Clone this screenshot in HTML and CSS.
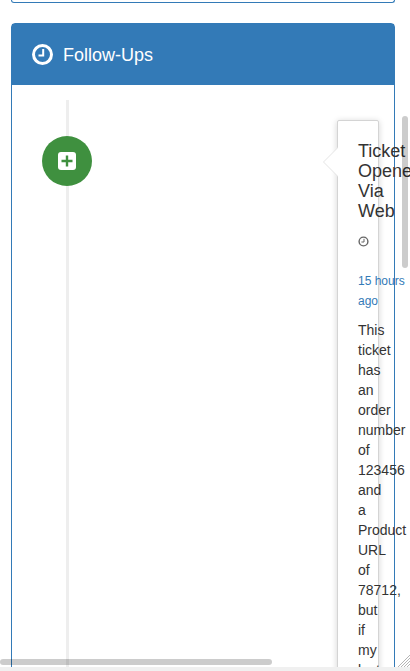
FILE: index.html
```html
<!DOCTYPE html>
<html lang="en">
<head>
  <meta charset="UTF-8" />
  <meta name="viewport" content="width=device-width, initial-scale=1.0"/>
  <title>Follow-Ups</title>
  <link rel="stylesheet" href="styles.css">
</head>
<body>
  <div class="window">
    <div class="panel-end"></div>

    <div class="panel">
      <div class="panel-heading">
        <svg class="heading-icon" viewBox="0 0 21 21">
          <circle cx="10.5" cy="10.5" r="9" fill="none" stroke="#fff" stroke-width="3"/>
          <path d="M11.2 5v6.5H6.5" fill="none" stroke="#fff" stroke-width="2"/>
        </svg>
        <span>Follow-Ups</span>
      </div>

      <div class="timeline">
        <div class="timeline-item">
          <div class="badge">
            <svg class="badge-icon" viewBox="0 0 18 18">
              <rect width="18" height="18" rx="3" fill="#fff"/>
              <path d="M9 3.5v11M3.5 9h11" fill="none" stroke="#3f903f" stroke-width="2.4"/>
            </svg>
          </div>
          <div class="timeline-panel">
            <h4>Ticket Opened Via Web</h4>
            <svg class="small-clock" viewBox="0 0 11 11">
              <circle cx="5.5" cy="5.5" r="4.4" fill="none" stroke="#666" stroke-width="1.4"/>
              <path d="M6 2.8v3.2H3.4" fill="none" stroke="#666" stroke-width="1"/>
            </svg>
            <a class="time-link" href="#">15&nbsp;hours ago</a>
            <p>This ticket has an order number of 123456 and a Product URL of 78712, but if my last</p>
          </div>
        </div>
      </div>
    </div>

    <div class="thumb-vertical"></div>
    <div class="thumb-horizontal"></div>
    <div class="bottom-strip"></div>
    <svg class="resize-grip" viewBox="0 0 13 13">
      <path d="M13 1 1 13M13 4 4 13M13 7 7 13M13 10 10 13" fill="none" stroke="#b5b5b5" stroke-width="1"/>
    </svg>
  </div>
</body>
</html>
```

FILE: styles.css
```css
body {
  margin: 0;
  font-family: "Liberation Sans", Arial, sans-serif;
  font-size: 14px;
  line-height: 20px;
  color: #333;
  background-color: #fff;
}

.window {
  position: relative;
  width: 410px;
  height: 671px;
  overflow: hidden;
}

.panel-end {
  width: 382px;
  height: 2px;
  margin-left: 11px;
  border: 1px solid #337ab7;
  border-top: 0;
  border-radius: 0 0 4px 4px;
}

.panel {
  width: 382px;
  margin: 20px 0 0 11px;
  border: 1px solid #337ab7;
  border-radius: 4px;
}

.panel-heading {
  display: flex;
  align-items: center;
  gap: 10px;
  height: 61px;
  padding-left: 20px;
  background-color: #337ab7;
  color: #fff;
  font-size: 18px;
}

.heading-icon {
  width: 21px;
  height: 21px;
}

.timeline {
  position: relative;
  padding-top: 35px;
}

.timeline::before {
  content: "";
  position: absolute;
  top: 15px;
  left: 54px;
  bottom: 0;
  width: 3px;
  background-color: #eee;
}

.timeline-item {
  display: flex;
  justify-content: space-between;
  align-items: flex-start;
  padding-right: 15px;
}

.badge {
  position: relative;
  display: flex;
  align-items: center;
  justify-content: center;
  width: 50px;
  height: 50px;
  margin: 16px 0 0 30px;
  border-radius: 50%;
  background-color: #3f903f;
}

.badge-icon {
  width: 18px;
  height: 18px;
}

.timeline-panel {
  position: relative;
  width: 0;
  padding: 20px;
  border: 1px solid #d4d4d4;
  border-radius: 2px;
  background-color: #fff;
  box-shadow: 0 1px 6px rgba(0, 0, 0, 0.175);
}

.timeline-panel::before {
  content: "";
  position: absolute;
  top: 26px;
  left: -15px;
  border-top: 15px solid transparent;
  border-bottom: 15px solid transparent;
  border-right: 15px solid #e4e4e4;
}

.timeline-panel::after {
  content: "";
  position: absolute;
  top: 27px;
  left: -14px;
  border-top: 14px solid transparent;
  border-bottom: 14px solid transparent;
  border-right: 14px solid #fff;
}

.timeline-panel h4 {
  margin: 0;
  font-size: 18px;
  font-weight: 500;
  line-height: 20px;
}

.small-clock {
  display: block;
  width: 11px;
  height: 11px;
  margin-top: 15px;
}

.time-link {
  display: block;
  margin-top: 24px;
  font-size: 12px;
  color: #337ab7;
  text-decoration: none;
}

.timeline-panel p {
  margin: 9px 0 0;
}

.thumb-vertical {
  position: absolute;
  top: 116px;
  right: 2px;
  width: 6px;
  height: 152px;
  border-radius: 3px;
  background-color: rgba(0, 0, 0, 0.2);
}

.thumb-horizontal {
  position: absolute;
  left: 0;
  bottom: 6px;
  width: 272px;
  height: 6px;
  border-radius: 3px;
  background-color: rgba(0, 0, 0, 0.2);
}

.bottom-strip {
  position: absolute;
  left: 0;
  right: 0;
  bottom: 0;
  height: 4px;
  background-color: #f0f0f0;
}

.resize-grip {
  position: absolute;
  right: 0;
  bottom: 4px;
  width: 13px;
  height: 13px;
}
```
